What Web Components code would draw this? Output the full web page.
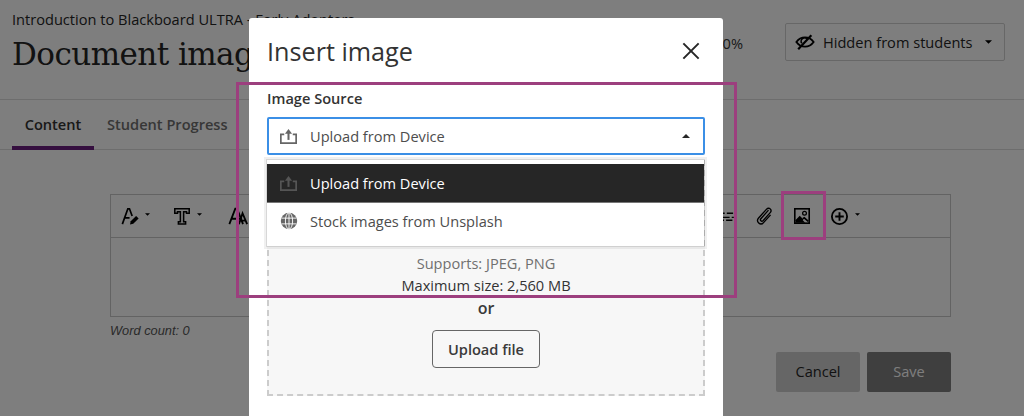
<!DOCTYPE html>
<html lang="en"><head><meta charset="utf-8"><title>Insert image</title>
<style>
html,body{margin:0;padding:0;background:#fff}
body{font-family:"Open Sans","Noto Sans",sans-serif;color:#262626}
</style></head><body>
<bb-page>
  <bb-header slot="page">
    <span slot="crumb">Introduction to Blackboard ULTRA - Early Adopters</span>
    <span slot="title">Document image</span>
    <span slot="progress">0%</span>
    <bb-visibility slot="action">Hidden from students</bb-visibility>
  </bb-header>
  <bb-tabs slot="page"></bb-tabs>
  <bb-editor slot="page"></bb-editor>
  <bb-actions slot="page"></bb-actions>
  <bb-modal slot="modal"></bb-modal>
</bb-page>
<script>
const ICONS={
 upload:'<path d="M6 7.500H2v10.300h18V7.500h-4" fill="none" stroke="currentColor" stroke-width="2"/><path d="M11 14V4" fill="none" stroke="currentColor" stroke-width="2.400"/><path d="M6.800 6.800 11 1.200l4.200 5.600z" fill="currentColor"/>',
 globe:'<circle cx="11" cy="11" r="10" fill="currentColor"/><g fill="none" stroke="#fff" stroke-width="1.100"><ellipse cx="11" cy="11" rx="4.400" ry="10"/><path d="M11 1v20M1.800 7.500h18.400M1.800 14.500h18.400"/></g>',
 eye:'<path d="M1.500 11c2.400-3.400 5.600-5.100 9.500-5.100s7.100 1.700 9.500 5.100c-2.400 3.400-5.600 5.100-9.500 5.100S3.900 14.400 1.500 11z" fill="none" stroke="currentColor" stroke-width="2"/><path d="M7.500 12.500a3.700 3.700 0 0 1 6-4.500" fill="none" stroke="currentColor" stroke-width="1.800"/><path d="M3.500 19 18 3.500" stroke="currentColor" stroke-width="2.400" fill="none"/>',
 close:'<path d="M1.500 1.500l17 17M18.500 1.500l-17 17" stroke="currentColor" stroke-width="2.200" fill="none"/>',
 apen:'<path d="M1.500 19 7.600 2h1.800l3 8M4.500 12h5" fill="none" stroke="currentColor" stroke-width="1.900"/><path d="M10 19.500l.8-3.600 6-6 2.800 2.800-6 6z" fill="currentColor"/>',
 tee:'<path d="M2 2h16v5h-3V5.200h-3.200v11.300h2.200V19H6v-2.500h2.200V5.200H5V7H2z" fill="none" stroke="currentColor" stroke-width="1.700"/>',
 aa:'<path d="M1.500 19 8 2h2l6.500 17M4.500 13h11" fill="none" stroke="currentColor" stroke-width="2"/><path d="M12 19 16 7l5 12M14 15h6" fill="none" stroke="currentColor" stroke-width="2"/>',
 dashes:'<path d="M1 6h4M8 6h9M1 12h11M15 12h3M1 16h3M7 16h9" fill="none" stroke="currentColor" stroke-width="2"/>',
 clip:'<path d="M15.500 5 7 14.500c-1.500 1.800.8 3.800 2.400 2.200l8-9c2.600-3-1.300-6.700-4-3.800L4.500 13.700c-3.500 4.100 2 9 5.500 5.200l7.800-8.700" transform="translate(-.5 -1.500)" fill="none" stroke="currentColor" stroke-width="1.500"/>',
 image:'<rect x="2" y="2" width="16" height="16" fill="none" stroke="currentColor" stroke-width="1.800"/><path d="M3 15.500l4.500-4.500 3.500 3.500M11 13l1.500-1 4.500 4" fill="none" stroke="currentColor" stroke-width="1.800"/><path d="M3 17.500v-2l4.500-4.500 6 6.500z" fill="currentColor"/><circle cx="12.800" cy="7" r="2.100" fill="none" stroke="currentColor" stroke-width="1.400"/>',
 plus:'<circle cx="10" cy="10" r="8" fill="none" stroke="currentColor" stroke-width="1.900"/><path d="M10 5.500v9M5.500 10h9" stroke="currentColor" stroke-width="2" fill="none"/>',
 up:'<path d="M0 5 5 0l5 5z" fill="currentColor"/>',
 down:'<path d="M0 0h10L5 5z" fill="currentColor"/>'
};
const BOX={upload:'0 0 22 20',globe:'0 0 22 22',eye:'0 0 22 22',close:'0 0 20 20',apen:'0 0 20 20',tee:'0 0 20 20',aa:'0 0 22 20',dashes:'0 0 18 20',clip:'0 0 20 20',image:'0 0 20 20',plus:'0 0 20 20',up:'0 0 10 5',down:'0 0 10 5'};
function def(name,css,html){
  customElements.define(name,class extends HTMLElement{
    constructor(){super();const r=this.attachShadow({mode:'open'});r.innerHTML='<style>'+css+'</style>'+html;}
  });
}
customElements.define('bb-icon',class extends HTMLElement{
  constructor(){super();this.attachShadow({mode:'open'});}
  connectedCallback(){
    const n=this.getAttribute('name'),w=this.getAttribute('w')||20,h=this.getAttribute('h')||w;
    this.shadowRoot.innerHTML='<style>:host{display:inline-flex;flex:none;line-height:0}</style><svg xmlns="http://www.w3.org/2000/svg" width="'+w+'" height="'+h+'" viewBox="'+BOX[n]+'">'+ICONS[n]+'</svg>';
  }
});
def('bb-page',`:host{display:block;position:relative;width:1024px;height:416px;overflow:hidden;background:#fff}
 .shade{position:absolute;inset:0;background:rgba(0,0,0,.505)}`,
 `<slot name="page"></slot><div class="shade"></div><slot name="modal"></slot>
  <bb-mark style="left:236px;top:82px;width:501px;height:216px"></bb-mark>
  <bb-mark style="left:781px;top:191px;width:45px;height:49px"></bb-mark>`);
def('bb-mark',`:host{display:block;position:absolute;box-sizing:border-box;border:3px solid #9c3f7e;z-index:5}`,``);
def('bb-header',`:host{display:flex;justify-content:space-between;box-sizing:border-box;height:100px;padding:0 19px 0 12px;border-bottom:1px solid #ddd}
 .crumb{font-size:14.6px;line-height:20px;margin-top:9px;color:#262626;white-space:nowrap}
 .title{font:31px/42px "DejaVu Serif",serif;letter-spacing:-.55px;margin-top:4px;color:#262626;white-space:nowrap}
 .right{display:flex;align-items:flex-start;gap:42px;padding-top:23px}
 .pct{font-size:14.6px;line-height:40px;color:#333}`,
 `<div><div class="crumb"><slot name="crumb"></slot></div><div class="title"><slot name="title"></slot></div></div>
  <div class="right"><div class="pct"><slot name="progress"></slot></div><slot name="action"></slot></div>`);
def('bb-visibility',`:host{display:flex;align-items:center;box-sizing:border-box;width:220px;height:38px;padding:0 12px 0 9px;border:1px solid #d0d0d0;border-radius:2px;font-size:14.6px;color:#262626}
 bb-icon{color:#000;margin-right:8px} span{flex:1;white-space:nowrap} .c{margin:0}`,
 `<bb-icon name="eye" w="20"></bb-icon><span><slot></slot></span><bb-icon class="c" name="down" w="7" h="4"></bb-icon>`);
def('bb-tabs',`:host{display:flex;box-sizing:border-box;height:50px;padding-left:12px;border-bottom:1px solid #ddd;font-size:14.6px;font-weight:600;line-height:49px}
 .on{width:82px;box-sizing:border-box;height:50px;text-align:center;color:#333;border-bottom:4px solid #6b1f7f;}
 .off{margin-left:13px;color:#707070}`,
 `<div class="on">Content</div><div class="off">Student Progress</div>`);
def('bb-editor',`:host{display:block;margin:44px 73px 0 110px}
 .box{border:1px solid #c8c8c8;height:123px;box-sizing:border-box}
 .bar{display:flex;align-items:center;height:42px;border-bottom:1px solid #c8c8c8;color:#000;position:relative}
 .wc{font:italic 12.8px/16px "Liberation Sans",sans-serif;color:#555;margin-top:6px}
 .sp{flex:1} bb-icon.c{margin-left:6px;margin-top:-4px}`,
 `<div class="box"><div class="bar">
   <bb-icon name="apen" w="18" style="margin-left:10px"></bb-icon><bb-icon class="c" name="down" w="5" h="3"></bb-icon>
   <bb-icon name="tee" w="18" style="margin-left:23px"></bb-icon><bb-icon class="c" name="down" w="5" h="3"></bb-icon>
   <bb-icon name="aa" w="20" style="margin-left:26px"></bb-icon>
   <div class="sp"></div>
   <bb-icon name="dashes" w="13" h="14" style="margin-right:21px"></bb-icon>
   <bb-icon name="clip" w="18" style="margin-right:20px"></bb-icon>
   <bb-icon name="image" w="18" style="margin-right:19px"></bb-icon>
   <bb-icon name="plus" w="19"></bb-icon><bb-icon class="c" name="down" w="5" h="3" style="margin-right:90px"></bb-icon>
  </div></div><div class="wc">Word count: 0</div>`);
def('bb-actions',`:host{display:flex;justify-content:flex-end;gap:7px;margin:13px 73px 0 0;font-size:14.6px}
 div{width:84px;height:40px;line-height:39px;text-align:center;border-radius:2px;box-sizing:border-box}
 .c{background:#cfcfcf;color:#262626}.s{background:#808080;color:#fff}`,
 `<div class="c">Cancel</div><div class="s">Save</div>`);
def('bb-modal',`:host{display:block;position:absolute;left:249px;top:18px;width:474px;height:420px;background:#fff;border-radius:3px;box-sizing:border-box;padding:0 18px;color:#262626;z-index:2}
 header{display:flex;justify-content:space-between;align-items:center;box-sizing:border-box;height:68px;padding-bottom:2px;font-size:25.2px;font-weight:400;color:#333}
 bb-icon{color:#262626;margin-right:5px}
 label{display:block;font-size:14.6px;font-weight:600;line-height:20px;margin-top:2px;color:#333}`,
 `<header><span>Insert image</span><bb-icon name="close" w="18"></bb-icon></header>
  <label>Image Source</label><bb-select></bb-select><bb-dropzone></bb-dropzone>`);
def('bb-select',`:host{display:block;position:relative;height:38px;width:438px;margin-top:9px;z-index:1}
 .f{display:flex;align-items:center;box-sizing:border-box;height:38px;border:2px solid #3b8fe6;border-radius:2px;padding:0 13px 0 10px;font-size:14.6px;color:#4d4d4d}
 .f bb-icon:first-child,.i bb-icon{margin-right:12px;color:#666}
 .f span{flex:1}
 .f .c{color:#262626;margin:0}
 .m{position:absolute;left:0;top:43px;width:437px;background:#fff;padding-top:4px;box-shadow:0 0 0 1px rgba(0,0,0,.1),0 0 0 3px rgba(0,0,0,.06);font-size:14.6px}
 .i{display:flex;align-items:center;box-sizing:border-box;height:39px;padding-left:12px;color:#4d4d4d}
 .d{height:39px;background:#262626;color:#fff;border-bottom:1px solid #777;}
 .d bb-icon{color:#555}
 .g{height:43px;padding-bottom:7px;padding-left:13px}
 .g bb-icon{margin-right:12px}`,
 `<div class="f"><bb-icon name="upload" w="19" h="17"></bb-icon><span>Upload from Device</span><bb-icon class="c" name="up" w="8" h="4"></bb-icon></div>
  <div class="m"><div class="i d"><bb-icon name="upload" w="19" h="17"></bb-icon>Upload from Device</div>
  <div class="i g"><bb-icon name="globe" w="18"></bb-icon>Stock images from Unsplash</div></div>`);
def('bb-dropzone',`:host{display:block;box-sizing:border-box;width:438px;height:236px;margin-top:5px;background:#f7f7f7;border:2px dashed #ccc;padding-top:63px;text-align:center;font-size:14.6px;line-height:22px;color:#333}
 .h{margin-bottom:5px}.s{color:#707070}.or{font-size:16px;font-weight:600;line-height:24px;color:#3a3a3a}
 .b{display:block;box-sizing:border-box;width:108px;height:38px;line-height:36px;margin:10px auto 0;border:1px solid #666;border-radius:4px;font-weight:600;color:#3a3a3a}`,
 `<div class="h">Drag files here</div><div class="s">Supports: JPEG, PNG</div><div>Maximum size: 2,560 MB</div><div class="or">or</div><div class="b">Upload file</div>`);
</script>
</body></html>
